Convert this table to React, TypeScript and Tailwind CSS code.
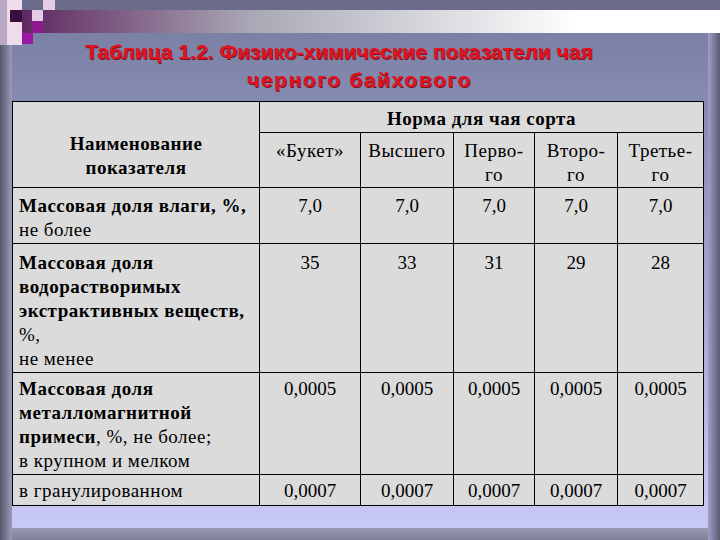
const GRADES = ["«Букет»", "Высшего", "Перво-|го", "Второ-|го", "Третье-|го"];

type Row = {
  height: string;
  pad: string;
  label: React.ReactNode;
  values: string[];
};

const ROWS: Row[] = [
  {
    height: "h-[56px]",
    pad: "pt-[6px]",
    label: (
      <>
        <b>Массовая доля влаги, %,</b>
        <br />
        не более
      </>
    ),
    values: ["7,0", "7,0", "7,0", "7,0", "7,0"],
  },
  {
    height: "h-[129px]",
    pad: "pt-[7px]",
    label: (
      <>
        <b>
          Массовая доля
          <br />
          водорастворимых
          <br />
          экстрактивных веществ,
        </b>
        <br />
        %,
        <br />
        не менее
      </>
    ),
    values: ["35", "33", "31", "29", "28"],
  },
  {
    height: "h-[102px]",
    pad: "pt-[4px]",
    label: (
      <>
        <b>
          Массовая доля
          <br />
          металломагнитной
          <br />
          примеси
        </b>
        , %, не более;
        <br />в крупном и мелком
      </>
    ),
    values: ["0,0005", "0,0005", "0,0005", "0,0005", "0,0005"],
  },
  {
    height: "h-[31px]",
    pad: "pt-[4px]",
    label: <>в гранулированном</>,
    values: ["0,0007", "0,0007", "0,0007", "0,0007", "0,0007"],
  },
];

const Corner = () => (
  <>
    <div className="absolute left-0 top-0 w-[7px] h-[45px] bg-[#b9a9c4]" />
    <div className="absolute left-[7px] top-0 w-[15px] h-[45px] bg-[#eedcec]" />
    <div className="absolute left-[10px] top-[10px] w-[12px] h-[12px] bg-[#3a0f40]" />
    <div className="absolute left-[32px] top-[10px] w-[11px] h-[11px] bg-[#e6cbe4]" />
    <div className="absolute left-[43px] top-0 w-[12px] h-[10px] bg-[#e6cbe4]" />
    <div className="absolute left-[32px] top-[21px] w-[11px] h-[12px] bg-[#8e1a90]" />
    <div className="absolute left-[22px] top-[33px] w-[11px] h-[11px] bg-[#9a18a2]" />
  </>
);

export default function App() {
  return (
    <div className="relative w-[720px] h-[540px] overflow-hidden flex flex-col bg-[#8a8aa4]">
      <div className="h-[10px] bg-[#6b6b8b]" />
      <div className="h-[23px] bg-gradient-to-r from-[#561a58] via-[#a9a9b6] via-35% to-white to-80%" />

      <div className="flex-1 flex">
        <div className="w-[12px] bg-gradient-to-r from-[#56566a] to-[#9c9cba]" />

        <div className="flex-1 flex flex-col bg-gradient-to-b from-[#7b81a5] to-[#cbcbf8]">
          <div className="pt-[5px] font-[family-name:'Liberation_Sans',Arial,sans-serif] font-bold text-[21px] leading-[28px] text-[#e2121e] [text-shadow:1px_1px_0_#7a1222]">
            <div className="pl-[73px]">Таблица 1.2. Физико-химические показатели чая</div>
            <div className="pl-[235px] tracking-[1.6px]">черного байхового</div>
          </div>

          <table className="mt-[7px] w-[691px] table-fixed border-collapse bg-[#dbdbdb] text-black text-[19px] leading-[24px] font-[family-name:'Liberation_Serif',serif]">
            <colgroup>
              <col className="w-[247px]" />
              <col className="w-[101px]" />
              <col className="w-[93px]" />
              <col className="w-[81px]" />
              <col className="w-[83px]" />
              <col className="w-[86px]" />
            </colgroup>
            <tbody>
              <tr className="h-[31px]">
                <td
                  rowSpan={2}
                  className="border border-black align-top pt-[30px] text-center font-bold tracking-[0.5px]"
                >
                  Наименование
                  <br />
                  показателя
                </td>
                <td
                  colSpan={5}
                  className="border border-black align-top pt-[5px] text-center font-bold tracking-[0.5px]"
                >
                  Норма для чая сорта
                </td>
              </tr>
              <tr className="h-[54px]">
                {GRADES.map((g) => (
                  <td key={g} className="border border-black align-top pt-[6px] text-center tracking-[0.5px]">
                    {g.split("|").map((part, i) => (
                      <div key={i}>{part}</div>
                    ))}
                  </td>
                ))}
              </tr>
              {ROWS.map((row, r) => (
                <tr key={r} className={row.height}>
                  <td className={`border border-black align-top pl-[6px] tracking-[0.5px] ${row.pad}`}>
                    {row.label}
                  </td>
                  {row.values.map((v, i) => (
                    <td key={i} className={`border border-black align-top text-center ${row.pad}`}>
                      {v}
                    </td>
                  ))}
                </tr>
              ))}
            </tbody>
          </table>

          <div className="flex-1" />
          <div className="h-[12px] bg-gradient-to-b from-[#9a9ab4] to-[#7e7e96]" />
        </div>

        <div className="w-[12px] bg-gradient-to-r from-[#a0a0c8] to-[#5a5a74]" />
      </div>

      <Corner />
    </div>
  );
}
